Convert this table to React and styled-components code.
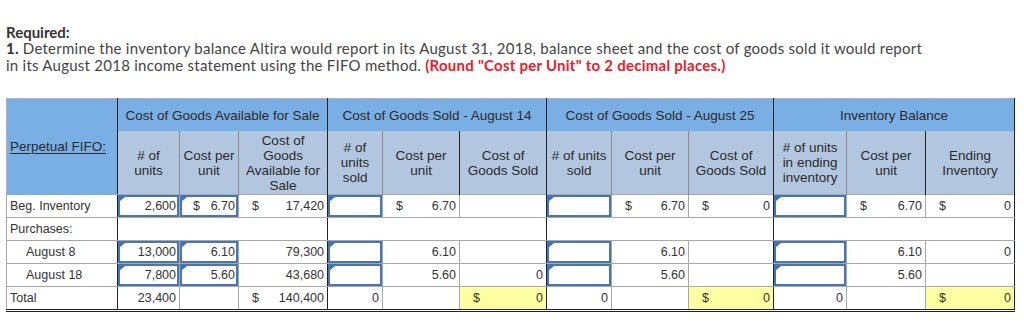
import React from "react";
import styled, { createGlobalStyle, css } from "styled-components";

const Global = createGlobalStyle`
  html, body { margin: 0; padding: 0; background: #fff; }
  body { font-family: Lato, "Open Sans", sans-serif; color: #333; }
`;

const Page = styled.div`
  padding: 24px 0 0 6px;
  width: 1018px;
`;

const Heading = styled.div`
  font-family: Lato, sans-serif;
  font-size: 15px;
  font-weight: 700;
  line-height: 16px;
  color: #333;
`;

const Prompt = styled.p`
  margin: 0;
  font-family: Lato, sans-serif;
  font-size: 15px;
  letter-spacing: 0.25px;
  line-height: 17px;
  color: #444;
  b { color: #333; }
`;

const Red = styled.span`
  color: #e8202a;
  font-weight: 700;
`;

const Table = styled.table`
  margin-top: 24px;
  width: 1008px;
  table-layout: fixed;
  border-collapse: collapse;
  font-family: "Liberation Sans", Arial, sans-serif;
  font-size: 12.5px;
  color: #333;
`;

const GroupTh = styled.th`
  background: #7aafe6;
  height: 32px;
  padding: 0;
  font-weight: 400;
  font-size: 13.5px;
  color: #2a2a2a;
  text-align: center;
  border-top: 1px solid #b0b0b0;
  border-left: 1px solid #222;
  border-right: 1px solid #222;
`;

const LabelTh = styled.th`
  background: #7aafe6;
  padding: 0 0 0 3px;
  text-align: left;
  font-weight: 400;
  font-size: 13.5px;
  color: #2a2a2a;
  border-top: 1px solid #b0b0b0;
  border-left: 1px solid #b0b0b0;
  border-right: 1px solid #222;
  border-bottom: 1px solid #7aafe6;
  u { text-underline-offset: 2px; }
`;

const SubTh = styled.th`
  background: #b3c6e0;
  height: 63px;
  padding: 0 1px;
  font-weight: 400;
  font-size: 13.5px;
  line-height: 15px;
  color: #2a2a2a;
  text-align: center;
  vertical-align: middle;
  border-left: 1px solid ${(p) => (p.$dark ? "#222" : "#8a8a8a")};
  border-right: 1px solid ${(p) => (p.$darkR ? "#222" : "#8a8a8a")};
`;

const Td = styled.td`
  height: 22px;
  padding: 0;
  border-top: 1px solid ${(p) => (p.$total ? "#777" : "#a8a8a8")};
  border-bottom: 1px solid #a8a8a8;
  border-left: 1px solid ${(p) => (p.$dark ? "#222" : "#a8a8a8")};
  border-right: 1px solid ${(p) => (p.$darkR ? "#222" : "#a8a8a8")};
  ${(p) =>
    p.$total &&
    css`
      border-bottom: 3px double #222;
    `}
`;

const LabelTd = styled(Td)`
  padding-left: ${(p) => (p.$indent ? "19px" : "3px")};
  border-left: 1px solid #a8a8a8;
  border-right: 1px solid #222;
  white-space: nowrap;
`;

const Box = styled.div`
  position: relative;
  box-sizing: border-box;
  height: 22px;
  display: flex;
  align-items: center;
  justify-content: ${(p) => (p.$dollar ? "space-between" : "flex-end")};
  padding: 0 3px 0 ${(p) => (p.$dollar ? "13px" : "3px")};
  background: ${(p) => (p.$yellow ? "#feffa0" : "transparent")};
  ${(p) =>
    p.$input &&
    css`
      border: 2px solid #4676b8;
      padding-left: ${p.$dollar ? "11px" : "3px"};
      padding-right: 1px;
      background: #fff;
      &::before {
        content: "";
        position: absolute;
        top: 0;
        left: 0;
        border-top: 4px solid #2f6fd0;
        border-right: 5px solid transparent;
      }
    `}
`;

const cols = [111, 62, 59, 89, 55, 77, 87, 65, 77, 85, 73, 79, 89];

function Cell({ v, input, dollar, yellow, dark, darkR, total }) {
  return (
    <Td $dark={dark} $darkR={darkR} $total={total}>
      <Box $input={input} $dollar={!!dollar} $yellow={yellow}>
        {dollar ? (
          <>
            <span>$</span>
            <span>{v}</span>
          </>
        ) : (
          v
        )}
      </Box>
    </Td>
  );
}

const darkLeft = new Set([0, 3, 6, 9]);
const darkRight = new Set([11]);

const rows = [
  {
    label: "Beg. Inventory",
    cells: [
      { v: "2,600", input: true },
      { v: "6.70", input: true, dollar: true },
      { v: "17,420", dollar: true },
      { v: "", input: true },
      { v: "6.70", dollar: true },
      { v: "" },
      { v: "", input: true },
      { v: "6.70", dollar: true },
      { v: "0", dollar: true },
      { v: "", input: true },
      { v: "6.70", dollar: true },
      { v: "0", dollar: true },
    ],
  },
  { label: "Purchases:", spans: [3, 3, 3, 3] },
  {
    label: "August 8",
    indent: true,
    cells: [
      { v: "13,000", input: true },
      { v: "6.10", input: true },
      { v: "79,300" },
      { v: "", input: true },
      { v: "6.10" },
      { v: "" },
      { v: "", input: true },
      { v: "6.10" },
      { v: "" },
      { v: "", input: true },
      { v: "6.10" },
      { v: "0" },
    ],
  },
  {
    label: "August 18",
    indent: true,
    cells: [
      { v: "7,800", input: true },
      { v: "5.60", input: true },
      { v: "43,680" },
      { v: "", input: true },
      { v: "5.60" },
      { v: "0" },
      { v: "", input: true },
      { v: "5.60" },
      { v: "" },
      { v: "", input: true },
      { v: "5.60" },
      { v: "" },
    ],
  },
  {
    label: "Total",
    total: true,
    cells: [
      { v: "23,400" },
      { v: "" },
      { v: "140,400", dollar: true },
      { v: "0" },
      { v: "" },
      { v: "0", dollar: true, yellow: true },
      { v: "0" },
      { v: "" },
      { v: "0", dollar: true, yellow: true },
      { v: "0" },
      { v: "" },
      { v: "0", dollar: true, yellow: true },
    ],
  },
];

export default function App() {
  return (
    <Page>
      <Global />
      <Heading>Required:</Heading>
      <Prompt>
        <b>1.</b> Determine the inventory balance Altira would report in its August 31, 2018, balance sheet and the cost of goods sold it would report
        <br />
        in its August 2018 income statement using the FIFO method. <Red>(Round "Cost per Unit" to 2 decimal places.)</Red>
      </Prompt>
      <Table>
        <colgroup>
          {cols.map((w, i) => (
            <col key={i} style={{ width: w }} />
          ))}
        </colgroup>
        <thead>
          <tr>
            <LabelTh rowSpan={2}>
              <u>Perpetual FIFO:</u>
            </LabelTh>
            <GroupTh colSpan={3}>Cost of Goods Available for Sale</GroupTh>
            <GroupTh colSpan={3}>Cost of Goods Sold - August 14</GroupTh>
            <GroupTh colSpan={3}>Cost of Goods Sold - August 25</GroupTh>
            <GroupTh colSpan={3}>Inventory Balance</GroupTh>
          </tr>
          <tr>
            <SubTh $dark># of<br />units</SubTh>
            <SubTh>Cost per<br />unit</SubTh>
            <SubTh $darkR>Cost of<br />Goods<br />Available for<br />Sale</SubTh>
            <SubTh $dark># of<br />units<br />sold</SubTh>
            <SubTh $darkR>Cost per<br />unit</SubTh>
            <SubTh $darkR>Cost of<br />Goods Sold</SubTh>
            <SubTh $dark># of units<br />sold</SubTh>
            <SubTh>Cost per<br />unit</SubTh>
            <SubTh $darkR>Cost of<br />Goods Sold</SubTh>
            <SubTh $dark># of units<br />in ending<br />inventory</SubTh>
            <SubTh $darkR>Cost per<br />unit</SubTh>
            <SubTh $darkR>Ending<br />Inventory</SubTh>
          </tr>
        </thead>
        <tbody>
          {rows.map((r) => (
            <tr key={r.label}>
              <LabelTd $indent={r.indent} $total={r.total}>
                {r.label}
              </LabelTd>
              {r.spans
                ? r.spans.map((s, i) => (
                    <Td key={i} colSpan={s} $dark $darkR />
                  ))
                : r.cells.map((c, i) => (
                    <Cell
                      key={i}
                      {...c}
                      total={r.total}
                      dark={darkLeft.has(i)}
                      darkR={darkRight.has(i) || darkLeft.has(i + 1)}
                    />
                  ))}
            </tr>
          ))}
        </tbody>
      </Table>
    </Page>
  );
}
